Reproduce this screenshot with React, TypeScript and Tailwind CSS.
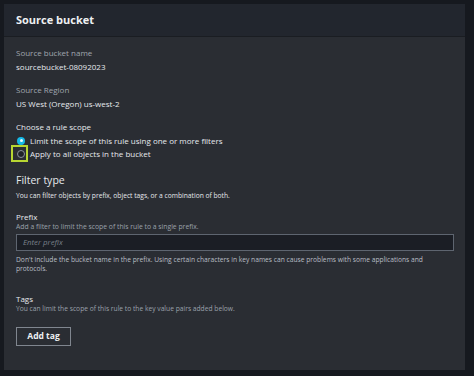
import React from "react";

export default function App() {
  return (
    <div className="w-[474px] h-[376px] bg-[#16191f] pt-[4px] pl-[4px] overflow-hidden" style={{ fontFamily: '"Open Sans", "Noto Sans", sans-serif' }}>
      <div className="w-[461px] h-[366px] bg-[#2a2d33] flex flex-col">
        <div className="h-[33px] bg-[#22262e] border-b border-[#1a1d22] flex items-center px-[12px]">
          <span className="text-[11px] font-bold text-[#eef0f2]">Source bucket</span>
        </div>
        <div className="px-[12px] pt-[10px] flex flex-col text-[#e6e9ed]">
          <div className="text-[8px] text-[#a0a6af] leading-[12px]">Source bucket name</div>
          <div className="text-[8px] leading-[12px] mt-[2px]">sourcebucket-08092023</div>
          <div className="text-[8px] text-[#a0a6af] leading-[12px] mt-[11px]">Source Region</div>
          <div className="text-[8px] leading-[12px] mt-[2px]">US West (Oregon) us-west-2</div>
          <div className="text-[8px] leading-[12px] mt-[11px]">Choose a rule scope</div>
          <div className="flex items-center h-[13px] mt-[1px]">
            <span className="w-[8px] h-[8px] rounded-full bg-[#14b8e6] flex items-center justify-center ml-[1px]">
              <span className="w-[3px] h-[3px] rounded-full bg-[#e8f8fd]" />
            </span>
            <span className="text-[8px] ml-[5px]">Limit the scope of this rule using one or more filters</span>
          </div>
          <div className="flex items-center h-[13px] relative">
            <span className="absolute left-[-5px] top-[-2px] w-[17px] h-[17px] border-[2px] border-[#b7d532]" />
            <span className="w-[8px] h-[8px] rounded-full border-[1.5px] border-[#8b929c] bg-[#1f2228] ml-[1px]" />
            <span className="text-[8px] ml-[5px]">Apply to all objects in the bucket</span>
          </div>
          <div className="text-[10.5px] leading-[16px] mt-[12px]">Filter type</div>
          <div className="text-[6.7px] leading-[10px] mt-[3px]">You can filter objects by prefix, object tags, or a combination of both.</div>
          <div className="text-[8px] leading-[11px] mt-[10px]">Prefix</div>
          <div className="text-[6.8px] leading-[10px] text-[#9aa1ab]">Add a filter to limit the scope of this rule to a single prefix.</div>
          <div className="h-[17px] mt-[2px] w-[438px] border border-[#5e6570] bg-[#1b1e25] flex items-center px-[6px]">
            <span className="text-[7.8px] italic text-[#7a808a]">Enter prefix</span>
          </div>
          <div className="text-[6.7px] leading-[9px] text-[#b9bec5] mt-[4px] w-[412px]">Don't include the bucket name in the prefix. Using certain characters in key names can cause problems with some applications and protocols.</div>
          <div className="text-[8px] leading-[11px] mt-[20px]">Tags</div>
          <div className="text-[6.7px] leading-[10px] text-[#9aa1ab]">You can limit the scope of this rule to the key value pairs added below.</div>
          <div className="mt-[13px] w-[55px] h-[19px] border border-[#80868f] flex items-center justify-center">
            <span className="text-[8.5px] font-bold text-[#eef0f2]">Add tag</span>
          </div>
        </div>
      </div>
    </div>
  );
}
